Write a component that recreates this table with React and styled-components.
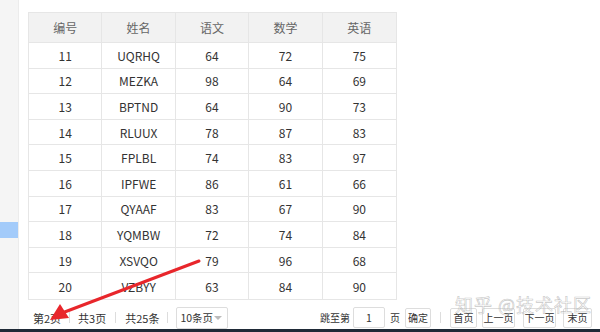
import React from "react";
import styled, { createGlobalStyle } from "styled-components";

const Global = createGlobalStyle`
  html, body { margin: 0; padding: 0; background: #fff; }
  body { font-family: "Noto Sans CJK SC", "Noto Sans", sans-serif; }
  * { box-sizing: border-box; }
`;

const Page = styled.div`
  position: relative;
  width: 600px;
  height: 332px;
  display: flex;
  flex-direction: column;
  overflow: hidden;
`;

const Main = styled.div`
  flex: 1;
  display: flex;
`;

const Sidebar = styled.div`
  width: 19px;
  background: #f5f5f5;
  border-right: 1px solid #ececec;
  padding-top: 222px;
`;

const SideActive = styled.div`
  height: 16px;
  background: #a3cbfa;
`;

const Content = styled.div`
  flex: 1;
  padding: 12px 0 0 9px;
  display: flex;
  flex-direction: column;
`;

const Table = styled.div`
  width: 369px;
  border: 1px solid #e6e6e6;
  display: grid;
  grid-template-columns: repeat(5, 1fr);
  font-size: 12px;
`;

const Cell = styled.div`
  height: ${(p) => (p.$head ? "30px" : "25.6px")};
  display: flex;
  align-items: center;
  justify-content: center;
  background: ${(p) => (p.$head ? "#f2f2f2" : "#fff")};
  color: ${(p) => (p.$head ? "#666" : "#333")};
  border-right: ${(p) => (p.$last ? "none" : "1px solid #e6e6e6")};
  border-bottom: ${(p) => (p.$bottom ? "none" : "1px solid #e6e6e6")};
`;

const Pager = styled.div`
  margin-top: 7px;
  height: 22px;
  display: flex;
  align-items: center;
  font-size: 11px;
  color: #333;
  padding-left: 5px;
  padding-right: 8px;
  white-space: nowrap;
`;

const Item = styled.span`
  font-size: ${(p) => p.$fs || 11}px;
`;

const Sep = styled.span`
  width: 1px;
  height: 11px;
  background: #ddd;
  margin: 0 ${(p) => p.$m || 10}px;
`;

const Select = styled.div`
  width: 52px;
  height: 22px;
  border: 1px solid #ddd;
  border-radius: 2px;
  display: flex;
  align-items: center;
  justify-content: space-between;
  padding: 0 5px 0 3px;
  font-size: 10.5px;
`;

const Caret = styled.span`
  width: 0;
  height: 0;
  border-left: 4px solid transparent;
  border-right: 4px solid transparent;
  border-top: 4px solid #bbb;
`;

const Spacer = styled.div`
  flex: 1;
`;

const Input = styled.div`
  width: 32px;
  height: 21px;
  border: 1px solid #ddd;
  border-radius: 2px;
  display: flex;
  align-items: center;
  justify-content: center;
  margin: 0 5px 0 3px;
  font-size: 10.5px;
`;

const Btn = styled.span`
  width: ${(p) => p.$w}px;
  height: 20px;
  border: 1px solid #ddd;
  border-radius: 2px;
  display: flex;
  align-items: center;
  justify-content: center;
  font-size: 10px;
  margin-left: ${(p) => p.$ml || 0}px;
`;

const Footer = styled.div`
  height: 5px;
  background: #1f2a37;
`;

const Overlay = styled.svg`
  position: absolute;
  left: 0;
  top: 0;
  pointer-events: none;
`;

const Watermark = styled.div`
  position: absolute;
  left: 455px;
  top: 291px;
  font-size: 18px;
  color: rgba(255, 255, 255, 0.4);
  -webkit-text-stroke: 0.6px rgba(150, 150, 150, 0.55);
  letter-spacing: 1px;
  white-space: nowrap;
`;

const heads = ["编号", "姓名", "语文", "数学", "英语"];
const rows = [
  [11, "UQRHQ", 64, 72, 75],
  [12, "MEZKA", 98, 64, 69],
  [13, "BPTND", 64, 90, 73],
  [14, "RLUUX", 78, 87, 83],
  [15, "FPLBL", 74, 83, 97],
  [16, "IPFWE", 86, 61, 66],
  [17, "QYAAF", 83, 67, 90],
  [18, "YQMBW", 72, 74, 84],
  [19, "XSVQO", 79, 96, 68],
  [20, "VZBYY", 63, 84, 90],
];

export default function App() {
  return (
    <>
      <Global />
      <Page>
        <Main>
          <Sidebar>
            <SideActive />
          </Sidebar>
          <Content>
            <Table>
              {heads.map((h, i) => (
                <Cell key={h} $head $last={i === 4}>
                  {h}
                </Cell>
              ))}
              {rows.map((r, ri) =>
                r.map((v, ci) => (
                  <Cell key={ri + "-" + ci} $last={ci === 4} $bottom={ri === rows.length - 1}>
                    {v}
                  </Cell>
                ))
              )}
            </Table>
            <Pager>
              <Item>第2页</Item>
              <Sep $m={8} />
              <Item>共3页</Item>
              <Sep $m={9} />
              <Item>共25条</Item>
              <Sep $m={8} />
              <Select>
                <span>10条页</span>
                <Caret />
              </Select>
              <Spacer />
              <Item $fs={10}>跳至第</Item>
              <Input>1</Input>
              <Item $fs={10}>页</Item>
              <Btn $w={26} $ml={5}>确定</Btn>
              <Sep $m={9} />
              <Btn $w={27}>首页</Btn>
              <Btn $w={33} $ml={5}>上一页</Btn>
              <Btn $w={33} $ml={8}>下一页</Btn>
              <Btn $w={29} $ml={7}>末页</Btn>
            </Pager>
          </Content>
        </Main>
        <Footer />
        <Watermark>知乎 @技术社区</Watermark>
        <Overlay width="600" height="332" viewBox="0 0 600 332">
          <path d="M199 261 L62 313" stroke="#e8262b" strokeWidth="3" strokeLinecap="round" />
          <path d="M50 320 L60 304 L69 318 Z" fill="#e8262b" />
        </Overlay>
      </Page>
    </>
  );
}
